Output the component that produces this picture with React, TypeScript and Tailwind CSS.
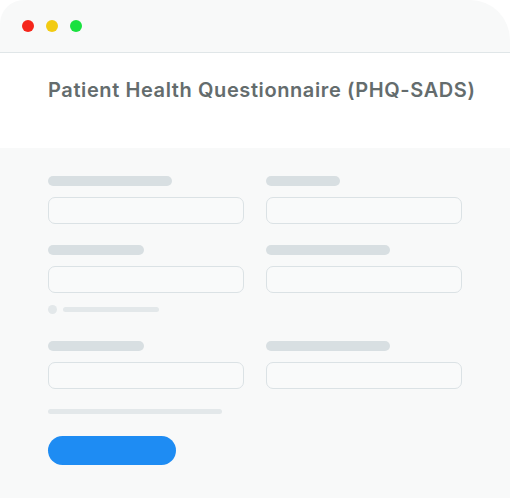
export default function App() {
  return (
    <div className="h-[498px] w-[510px] overflow-hidden bg-white">
      <div className="flex h-full flex-col overflow-hidden rounded-tl-[24px] rounded-tr-[40px] bg-[#f8f9f9]">
        {/* title bar */}
        <div className="flex h-[53px] shrink-0 items-center gap-3 border-b border-[#e0e6e8] pl-[22px] pb-[1px]">
          <span className="h-3 w-3 rounded-full bg-[#f5261b]" />
          <span className="h-3 w-3 rounded-full bg-[#f2cb12]" />
          <span className="h-3 w-3 rounded-full bg-[#19e13f]" />
        </div>

        {/* header */}
        <div className="flex h-[95px] shrink-0 items-start bg-white pl-12 pt-[22px]">
          <h1 className="font-['Inter',sans-serif] text-[20px] font-semibold tracking-[0.6px] text-[#646c6d]">
            Patient Health Questionnaire (PHQ-SADS)
          </h1>
        </div>

        {/* form skeleton */}
        <div className="flex flex-1 flex-col px-12 pt-7">
          <div className="grid grid-cols-[196px_196px] gap-x-[22px]">
            <Field label="w-[124px]" />
            <Field label="w-[74px]" />
          </div>

          <div className="mt-[21px] grid grid-cols-[196px_196px] gap-x-[22px]">
            <Field label="w-[96px]" />
            <Field label="w-[124px]" />
          </div>

          <div className="mt-3 flex items-center gap-[6px]">
            <span className="h-[9px] w-[9px] rounded-full bg-[#e3e8ea]" />
            <span className="h-[5px] w-[96px] rounded-full bg-[#e3e8ea]" />
          </div>

          <div className="mt-[27px] grid grid-cols-[196px_196px] gap-x-[22px]">
            <Field label="w-[96px]" />
            <Field label="w-[124px]" />
          </div>

          <span className="mt-5 h-[5px] w-[174px] rounded-full bg-[#e3e8ea]" />

          <button
            type="button"
            className="mt-[22px] h-[29px] w-[128px] rounded-full bg-[#1e8cf3]"
          />
        </div>
      </div>
    </div>
  );
}

function Field({ label }: { label: string }) {
  return (
    <div className="flex flex-col">
      <span className={`h-[10px] rounded-full bg-[#d8dfe2] ${label}`} />
      <div className="mt-[11px] h-[27px] rounded-[7px] border border-[#dbe2e5] bg-[#f9fafa]" />
    </div>
  );
}
